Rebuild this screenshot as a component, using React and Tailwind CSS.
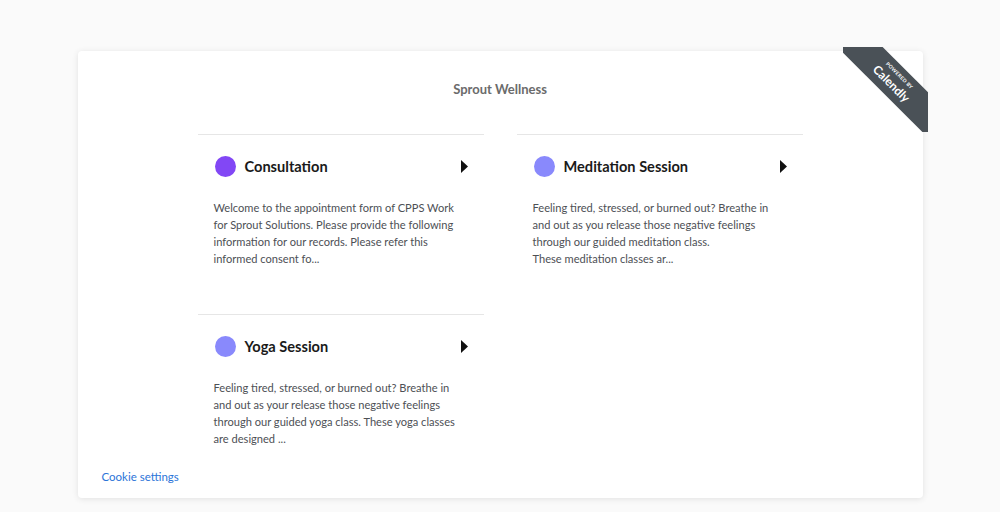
const events = [
  {
    name: 'Consultation',
    color: 'bg-[#8247f5]',
    lines: [
      'Welcome to the appointment form of CPPS Work',
      'for Sprout Solutions. Please provide the following',
      'information for our records. Please refer this',
      'informed consent fo...',
    ],
  },
  {
    name: 'Meditation Session',
    color: 'bg-[#8989fc]',
    lines: [
      'Feeling tired, stressed, or burned out? Breathe in',
      'and out as you release those negative feelings',
      'through our guided meditation class.',
      'These meditation classes ar...',
    ],
  },
  {
    name: 'Yoga Session',
    color: 'bg-[#8989fc]',
    lines: [
      'Feeling tired, stressed, or burned out? Breathe in',
      'and out as your release those negative feelings',
      'through our guided yoga class. These yoga classes',
      'are designed ...',
    ],
  },
]

function EventItem({ ev }) {
  return (
    <div className="h-[180px] border-t border-[#e6e6e6] px-[16px] pt-[21px]">
      <div className="flex items-center h-[21px]">
        <span className={`w-[21px] h-[21px] rounded-full ${ev.color} shrink-0 ml-[1px]`} />
        <span className="ml-[9px] pt-[2px] text-[14.6px] font-bold text-[#1a1a1a] flex-1">{ev.name}</span>
        <svg width="7" height="13" viewBox="0 0 7 13">
          <path d="M0 0 L7 6.5 L0 13 Z" fill="#111" />
        </svg>
      </div>
      <div className="mt-[22px] text-[11.1px] leading-[17px] text-[#4d5055]">
        {ev.lines.map(l => <div key={l} className="whitespace-nowrap">{l}</div>)}
      </div>
    </div>
  )
}

export default function App() {
  return (
    <div className="min-h-[512px] bg-[#fafafa] pt-[51px] font-['Lato',sans-serif]">
      <div className="relative mx-auto w-[845px] h-[447px] bg-white rounded-[4px] shadow-[0_1px_6px_rgba(0,0,0,0.1)]">
        <div className="absolute top-[-4px] right-[-5px] w-[85px] h-[85px] overflow-hidden">
          <div className="absolute left-[-19px] top-[18px] w-[140px] h-[32px] bg-[#4a5157] rotate-45 flex flex-col items-center justify-center text-white leading-none">
            <span className="text-[5px] font-bold tracking-[0.3px]">POWERED BY</span>
            <span className="text-[12px] font-bold mt-[3px]">Calendly</span>
          </div>
        </div>
        <div className="pt-[29px] text-center text-[13px] font-bold text-[#6b6b6b]">Sprout Wellness</div>
        <div className="mx-auto mt-[34px] w-[605px] grid grid-cols-2 gap-x-[33px]">
          {events.map(ev => <EventItem key={ev.name} ev={ev} />)}
        </div>
        <div className="absolute left-[24px] bottom-[13px] text-[11.5px] text-[#2b74d8]">Cookie settings</div>
      </div>
    </div>
  )
}
